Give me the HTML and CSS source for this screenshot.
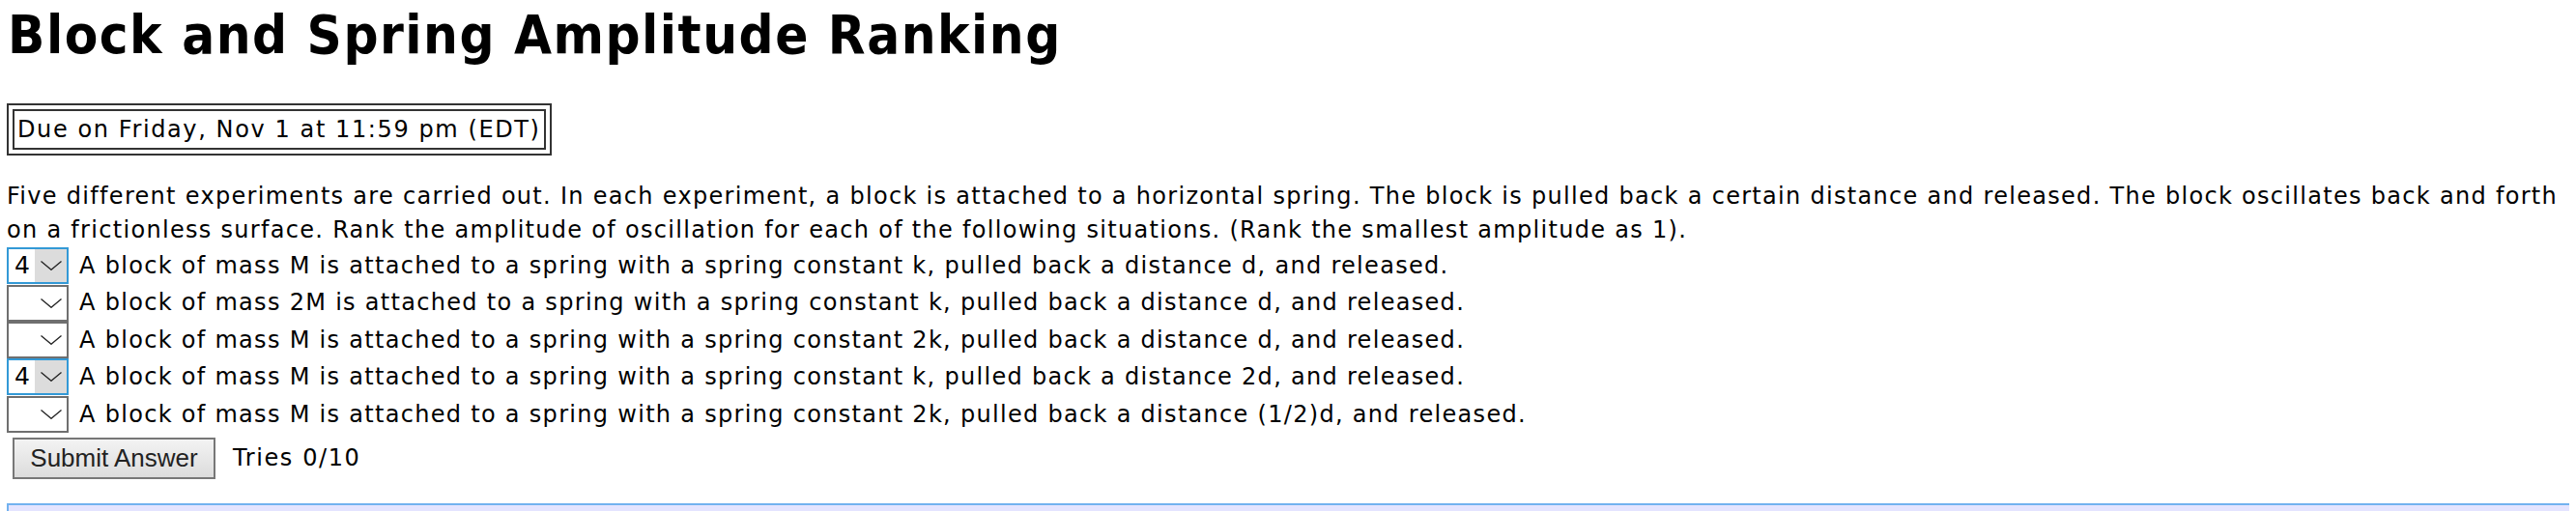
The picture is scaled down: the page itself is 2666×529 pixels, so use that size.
FILE: index.html
```html
<!DOCTYPE html>
<html lang="en">
<head>
<meta charset="utf-8">
<title>Block and Spring Amplitude Ranking</title>
<link rel="stylesheet" href="styles.css">
</head>
<body>
<h1 class="title">Block and Spring Amplitude Ranking</h1>
<div class="due"><div class="due-inner">Due on Friday, Nov 1 at 11:59 pm (EDT)</div></div>
<p class="intro">Five different experiments are carried out. In each experiment, a block is attached to a horizontal spring. The block is pulled back a certain distance and released. The block oscillates back and forth on a frictionless surface. Rank the amplitude of oscillation for each of the following situations. (Rank the smallest amplitude as 1).</p>
<div class="options">
  <div class="opt">
    <span class="sel sel-set"><span class="sel-val">4</span><span class="sel-btn"><svg class="chev" width="22" height="10" viewBox="0 0 22 10"><polyline points="0.5,0.5 11,9.3 21.5,0.5" fill="none" stroke="#222" stroke-width="1.3"/></svg></span></span>
    <span class="opt-text">A block of mass M is attached to a spring with a spring constant k, pulled back a distance d, and released.</span>
  </div>
  <div class="opt">
    <span class="sel"><span class="sel-val"></span><span class="sel-btn"><svg class="chev" width="22" height="10" viewBox="0 0 22 10"><polyline points="0.5,0.5 11,9.3 21.5,0.5" fill="none" stroke="#222" stroke-width="1.3"/></svg></span></span>
    <span class="opt-text">A block of mass 2M is attached to a spring with a spring constant k, pulled back a distance d, and released.</span>
  </div>
  <div class="opt">
    <span class="sel"><span class="sel-val"></span><span class="sel-btn"><svg class="chev" width="22" height="10" viewBox="0 0 22 10"><polyline points="0.5,0.5 11,9.3 21.5,0.5" fill="none" stroke="#222" stroke-width="1.3"/></svg></span></span>
    <span class="opt-text">A block of mass M is attached to a spring with a spring constant 2k, pulled back a distance d, and released.</span>
  </div>
  <div class="opt">
    <span class="sel sel-set"><span class="sel-val">4</span><span class="sel-btn"><svg class="chev" width="22" height="10" viewBox="0 0 22 10"><polyline points="0.5,0.5 11,9.3 21.5,0.5" fill="none" stroke="#222" stroke-width="1.3"/></svg></span></span>
    <span class="opt-text">A block of mass M is attached to a spring with a spring constant k, pulled back a distance 2d, and released.</span>
  </div>
  <div class="opt">
    <span class="sel"><span class="sel-val"></span><span class="sel-btn"><svg class="chev" width="22" height="10" viewBox="0 0 22 10"><polyline points="0.5,0.5 11,9.3 21.5,0.5" fill="none" stroke="#222" stroke-width="1.3"/></svg></span></span>
    <span class="opt-text">A block of mass M is attached to a spring with a spring constant 2k, pulled back a distance (1/2)d, and released.</span>
  </div>
</div>
<div class="actions">
  <button class="submit" type="button">Submit Answer</button>
  <span class="tries">Tries 0/10</span>
</div>
<div class="feedback"></div>
</body>
</html>
```
FILE: styles.css
```css
html, body {
  background: #fff;
}
body {
  margin: 8px 7px 0 7px;
  font-family: "DejaVu Sans", "Liberation Sans", sans-serif;
  font-size: 24px;
  letter-spacing: 1.3px;
  color: #000;
  overflow: hidden;
}
.title {
  margin: 0;
  font-family: "DejaVu Sans Condensed", "DejaVu Sans", sans-serif;
  font-size: 56px;
  letter-spacing: 1.5px;
  line-height: 56px;
  font-weight: bold;
  padding-left: 1px;
}
.due {
  display: inline-block;
  margin-top: 43px;
  border: 2px solid #333;
  padding: 4px;
}
.due-inner {
  border: 2px solid #333;
  padding: 0 3px;
  line-height: 38px;
  letter-spacing: 1.6px;
}
.intro {
  margin: 25px 0 0 0;
  line-height: 35px;
}
.options {
  display: flex;
  flex-direction: column;
}
.opt {
  display: flex;
  align-items: center;
  height: 38.4px;
  line-height: 38.4px;
  white-space: nowrap;
}
.sel {
  box-sizing: border-box;
  display: flex;
  width: 64px;
  height: 38px;
  border: 2px solid #6f6f6f;
  background: #fff;
  flex: none;
}
.sel-set {
  border-color: #3399d6;
}
.sel-val {
  width: 27px;
  padding-left: 6px;
  box-sizing: border-box;
  line-height: 34px;
  font-size: 25px;
}
.sel-btn {
  flex: 1;
  display: flex;
  align-items: center;
  justify-content: center;
}
.sel-set .sel-btn {
  background: #dcdcdc;
}
.chev {
  display: block;
}
.opt-text {
  margin-left: 11px;
}
.actions {
  display: flex;
  align-items: center;
  margin-top: 5px;
  padding-left: 6px;
  height: 43px;
}
.submit {
  box-sizing: border-box;
  width: 210px;
  height: 43px;
  border: 2px solid #777;
  background: linear-gradient(#f3f3f3, #dcdcdc);
  font-family: "Liberation Sans", Arial, sans-serif;
  font-size: 26px;
  letter-spacing: 0;
  color: #222;
  padding: 0;
  margin: 0;
}
.tries {
  margin-left: 18px;
  letter-spacing: 1.6px;
}
.feedback {
  margin-top: 25px;
  margin-right: -7px;
  height: 40px;
  border-top: 2px solid #72b2ef;
  border-left: 2px solid #72b2ef;
  background: #e4e4ff;
}
```
